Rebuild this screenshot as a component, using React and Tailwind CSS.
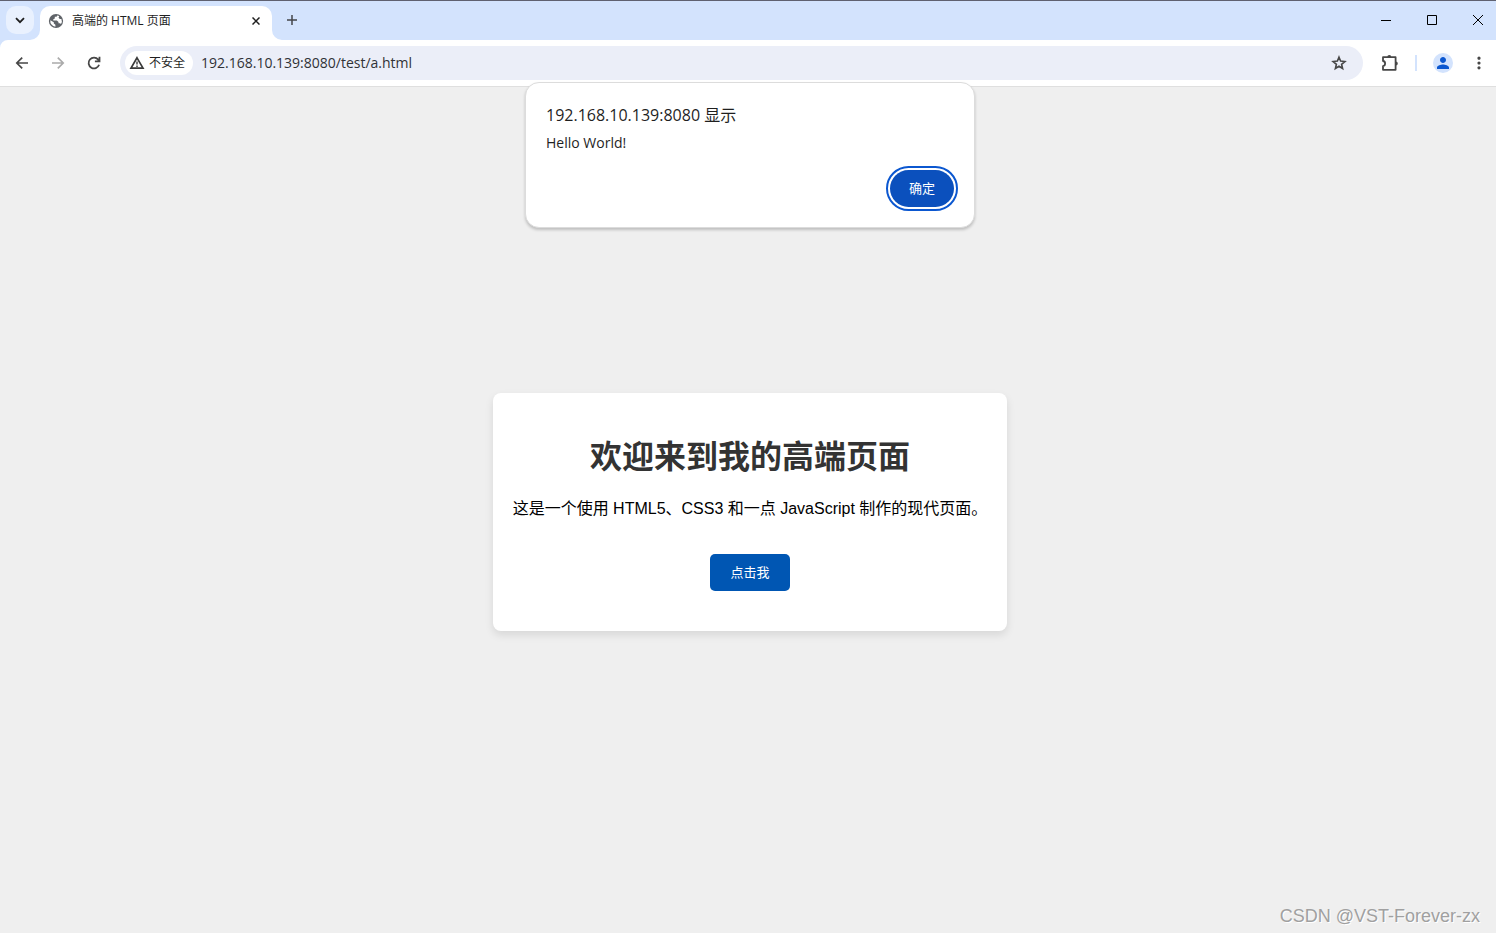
import { MdPerson, MdMoreVert } from "react-icons/md";

function TabStrip() {
  return (
    <header className="flex h-10 items-stretch border-t border-[#5f6170] bg-[#d3e3fd]">
      <div className="relative flex w-10 justify-center pt-[5px]">
        <button aria-label="搜索标签页" className="flex h-7 w-7 items-center justify-center rounded-[10px] bg-[#e9f1fe]">
          <svg width="10" height="7" viewBox="0 0 10 7" fill="none" stroke="#1f1f1f" strokeWidth="1.8"><path d="M1 1.2 5 5.2 9 1.2" /></svg>
        </button>
        <svg className="absolute right-0 bottom-0" width="10" height="10" fill="#fff"><path d="M10 0v10H0A10 10 0 0 0 10 0Z" /></svg>
        <svg className="absolute -bottom-2 left-0 z-10" width="8" height="8" fill="#d3e3fd"><path d="M0 8V0H8A8 8 0 0 0 0 8Z" /></svg>
      </div>
      <div className="mt-[5px] flex w-[232px] items-center rounded-t-[10px] bg-white pr-2 pb-1 pl-2">
        <svg width="16" height="16" viewBox="0 0 16 16" aria-hidden="true">
          <circle cx="8" cy="8" r="7.1" fill="#5f6368" />
          <path d="M9.2 2.4 8.6 3.8H6.8v1.7L5.3 6.2v1.2h3.6l1.6 1.5v1.3h1.5l1 .9A5.8 5.8 0 0 0 13.4 5.9h-1.6L10.6 4.8 11.2 3ZM2.3 7.3 5.8 9.2v1.4l1.6 1.2v2A5.8 5.8 0 0 1 2.3 7.3Z" fill="#fff" />
        </svg>
        <span className="ml-2 flex-1 text-xs text-[#1f1f1f]">高端的 HTML 页面</span>
        <button aria-label="关闭标签页" className="flex h-4 w-4 items-center justify-center">
          <svg width="8" height="8" viewBox="0 0 8 8" stroke="#1f1f1f" strokeWidth="1.5"><path d="m.5.5 7 7m0-7-7 7" /></svg>
        </button>
      </div>
      <div className="relative flex w-10 justify-center">
        <svg className="absolute bottom-0 left-0" width="10" height="10" fill="#fff"><path d="M0 0v10h10A10 10 0 0 1 0 0Z" /></svg>
        <button aria-label="新标签页" className="flex h-[38px] items-center">
          <svg width="10" height="10" viewBox="0 0 10 10" stroke="#44464a" strokeWidth="1.5"><path d="M5 0v10M0 5h10" /></svg>
        </button>
      </div>
      <div className="-mr-[5px] ml-auto flex h-[38px]">
        <button aria-label="最小化" className="flex w-[46px] items-center justify-center">
          <svg width="10" height="10" fill="#000"><path d="M0 5h10v1H0z" /></svg>
        </button>
        <button aria-label="最大化" className="flex w-[46px] items-center justify-center">
          <svg width="10" height="10" fill="none" stroke="#000"><path d="M.5.5h9v9h-9z" /></svg>
        </button>
        <button aria-label="关闭" className="flex w-[46px] items-center justify-center">
          <svg width="10" height="10" stroke="#000"><path d="m0 0 10 10M10 0 0 10" /></svg>
        </button>
      </div>
    </header>
  );
}

function Toolbar() {
  return (
    <nav className="flex h-[47px] items-center border-b border-[#dfdfdf] bg-white pr-[9px] pl-[14px]">
      <div className="flex gap-5">
        <button aria-label="后退">
          <svg width="16" height="16" viewBox="0 0 16 16" fill="none" stroke="#474747" strokeWidth="1.7"><path d="M14 8H3.2M8.2 2.6 2.8 8l5.4 5.4" /></svg>
        </button>
        <button aria-label="前进">
          <svg width="16" height="16" viewBox="0 0 16 16" fill="none" stroke="#ababab" strokeWidth="1.7"><path d="M2 8h10.8M7.8 2.6 13.2 8l-5.4 5.4" /></svg>
        </button>
        <button aria-label="重新加载">
          <svg width="16" height="16" viewBox="0 0 16 16" fill="none" stroke="#474747" strokeWidth="1.8"><path d="M13.1 9.8A5.4 5.4 0 1 1 12.2 4.6L13.4 6M13.5 1.8v4.6H8.9" /></svg>
        </button>
      </div>
      <div className="ml-[18px] flex h-[34px] flex-1 items-center rounded-full bg-[#ebeef8] pr-4 pl-[5px]">
        <button className="flex h-6 items-center gap-1 rounded-full bg-white pr-2 pl-1 text-xs text-[#1f1f1f]">
          <svg width="16" height="16" viewBox="0 0 16 16" fill="none" stroke="#3a3a3a" strokeWidth="1.7"><path d="M8 2.8 14 13.2H2Z" /><path d="M8 6.4v3.2M8 10.4v1.5" strokeWidth="1.4" /></svg>
          <span>不安全</span>
        </button>
        <input aria-label="地址" readOnly value="192.168.10.139:8080/test/a.html" className="ml-2 min-w-0 flex-1 bg-transparent text-sm text-[#303236] outline-none" />
        <button aria-label="为此标签页添加书签">
          <svg width="16" height="16" viewBox="0 0 16 16" fill="none" stroke="#474747" strokeWidth="1.6"><path d="m8 2.2 1.6 3.9 4.3.4-3.3 2.8 1 4.2L8 11.3l-3.6 2.2 1-4.2-3.3-2.8 4.3-.4Z" /></svg>
        </button>
      </div>
      <button aria-label="扩展程序" className="ml-[18px]">
        <svg width="18" height="18" viewBox="0 0 18 18">
          <path d="M2 3.2h12.6v12.6H2v-3.6c1.4-.2 2.1-1.2 2.1-2.6S3.400 7.200 2 7Z" fill="none" stroke="#474747" strokeWidth="1.8" strokeLinejoin="round" />
          <path d="M6.300 3a2 2 0 0 1 4 0ZM14.800 7.500a2 2 0 0 1 0 4Z" fill="#474747" />
        </svg>
      </button>
      <span className="ml-4 h-4 w-[2px] bg-[#d3e3fd]" />
      <button aria-label="个人资料" className="ml-4 flex h-5 w-5 items-center justify-center rounded-full bg-[#d3e3fd]"><MdPerson size={18} color="#0b57d0" /></button>
      <button aria-label="菜单" className="ml-[18px]"><MdMoreVert size={16} color="#474747" viewBox="2 2 20 20" /></button>
    </nav>
  );
}

function AlertDialog() {
  return (
    <section role="alertdialog" aria-labelledby="alert-title" className="absolute top-[82px] left-1/2 ml-0.5 flex w-[450px] -translate-x-1/2 flex-col rounded-[14px] border border-[#dcdcdc] bg-white p-5 shadow-[0_2px_3px_rgba(0,0,0,0.2)]">
      <h2 id="alert-title" className="text-base leading-6 text-[#1f1f1f]">192.168.10.139:8080 显示</h2>
      <p className="mt-1.5 text-sm leading-5 text-[#1f1f1f]">Hello World!</p>
      <button className="mt-[17px] h-[37px] w-16 self-end rounded-full bg-[#0b50bd] text-[13px] text-white outline-2 outline-offset-2 outline-[#0b57d0]">确定</button>
    </section>
  );
}

export default function App() {
  return (
    <div className="relative flex min-h-screen flex-col bg-[#efefef] font-['Open_Sans','Noto_Sans_CJK_SC',sans-serif]">
      <TabStrip />
      <Toolbar />
      <main className="flex flex-1 items-center justify-center pt-1 pl-1 font-['Liberation_Sans','Noto_Sans_CJK_SC',sans-serif]">
        <article className="flex flex-col items-center rounded-lg bg-white px-5 py-10 shadow-[0_4px_8px_rgba(0,0,0,0.1)]">
          <h1 className="text-[32px] leading-[48px] font-bold text-[#333]">欢迎来到我的高端页面</h1>
          <p className="mt-4 text-base leading-6 text-black">这是一个使用 HTML5、CSS3 和一点 JavaScript 制作的现代页面。</p>
          <button className="mt-[33px] h-[37px] rounded-[5px] bg-[#0056b3] px-5 text-[13px] text-white">点击我</button>
        </article>
      </main>
      <AlertDialog />
      <span className="absolute right-4 bottom-[3px] font-['Liberation_Sans',sans-serif] text-lg text-[#a0a0a0] [text-shadow:1px_1px_0_#fff]">CSDN @VST-Forever-zx</span>
    </div>
  );
}
